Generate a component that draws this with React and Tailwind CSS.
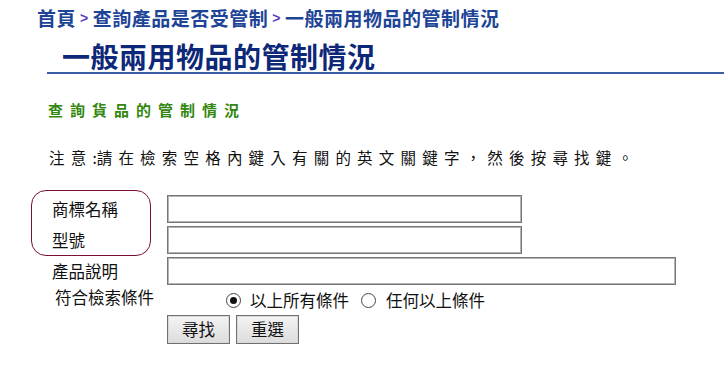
import React from 'react';

const cjk = { fontFamily: '"Noto Sans CJK TC", "Noto Sans", sans-serif' };

function Radio({ checked }) {
    return (
        <span className="inline-flex w-[15px] h-[15px] rounded-full border border-[#444] bg-white items-center justify-center">
            {checked && <span className="w-[7px] h-[7px] rounded-full bg-[#111]" />}
        </span>
    );
}

function Field({ width }) {
    return (
        <div
            className={`h-[28px] ${width} border border-[#777] bg-white shadow-[inset_0_0_0_1px_#b4b4b4]`}
        />
    );
}

function Button({ children }) {
    return (
        <button className="w-[63px] h-[29px] border border-[#707070] shadow-[inset_0_0_0_1px_#d8d8d8] bg-gradient-to-b from-[#f4f4f4] to-[#dcdcdc] text-[16.5px] leading-[27px] text-[#111]">
            {children}
        </button>
    );
}

export default function App() {
    return (
        <div className="w-[724px] h-[366px] bg-white overflow-hidden" style={cjk}>
            {/* 麵包屑 */}
            <div className="pl-[37px] pt-[6px] text-[19px] leading-[24px] font-bold tracking-[0.5px] text-[#1d4496] flex items-center">
                <span>首頁</span>
                <span className="mx-[4px] text-[14px] text-[#5a3fc0]" style={{ fontFamily: '"Liberation Sans", sans-serif' }}>&gt;</span>
                <span>查詢產品是否受管制</span>
                <span className="mx-[4px] text-[14px] text-[#5a3fc0]" style={{ fontFamily: '"Liberation Sans", sans-serif' }}>&gt;</span>
                <span>一般兩用物品的管制情況</span>
            </div>

            {/* 標題 */}
            <div className="mt-[10px] ml-[47px] pl-[15px] border-b-2 border-[#3d5ca6]">
                <h1 className="text-[28px] leading-[32px] font-bold tracking-[0.5px] text-[#0d2878]">
                    一般兩用物品的管制情況
                </h1>
            </div>

            <div className="pl-[48px]">
                <h2 className="mt-[26px] text-[15px] leading-[20px] font-bold tracking-[7px] text-[#33870f]">
                    查詢貨品的管制情況
                </h2>
                <p className="mt-[27px] pl-[1px] text-[15.5px] leading-[20px] tracking-[6.2px] text-[#111]">
                    注意<span className="tracking-normal">:</span>請在檢索空格內鍵入有關的英文關鍵字，然後按尋找鍵。
                </p>
            </div>

            {/* 表單 */}
            <div className="mt-[23px] ml-[31px] text-[16.5px] text-[#111]">
                <div className="flex">
                    <div className="w-[136px]">
                        <div className="w-[120px] h-[66px] border border-[#7a1030] rounded-[15px] pl-[20px] pt-[4px]">
                            <div className="h-[28px] leading-[28px]">商標名稱</div>
                            <div className="mt-[3px] h-[28px] leading-[28px]">型號</div>
                        </div>
                    </div>
                    <div className="pt-[5px] flex flex-col gap-[3px]">
                        <Field width="w-[355px]" />
                        <Field width="w-[355px]" />
                    </div>
                </div>

                <div className="flex mt-[1px]">
                    <div className="w-[136px] pl-[21px] h-[28px] leading-[28px]">產品說明</div>
                    <Field width="w-[509px]" />
                </div>

                <div className="flex mt-[1px]">
                    <div className="w-[136px] pl-[24px] leading-[22px]">符合檢索條件</div>
                    <div className="pt-[3px] pl-[59px] flex items-center leading-[22px]">
                        <Radio checked />
                        <span className="ml-[9px]">以上所有條件</span>
                        <span className="ml-[12px] flex"><Radio /></span>
                        <span className="ml-[10px]">任何以上條件</span>
                    </div>
                </div>

                <div className="flex mt-[4px] pl-[136px] gap-[6px]">
                    <Button>尋找</Button>
                    <Button>重選</Button>
                </div>
            </div>
        </div>
    );
}
